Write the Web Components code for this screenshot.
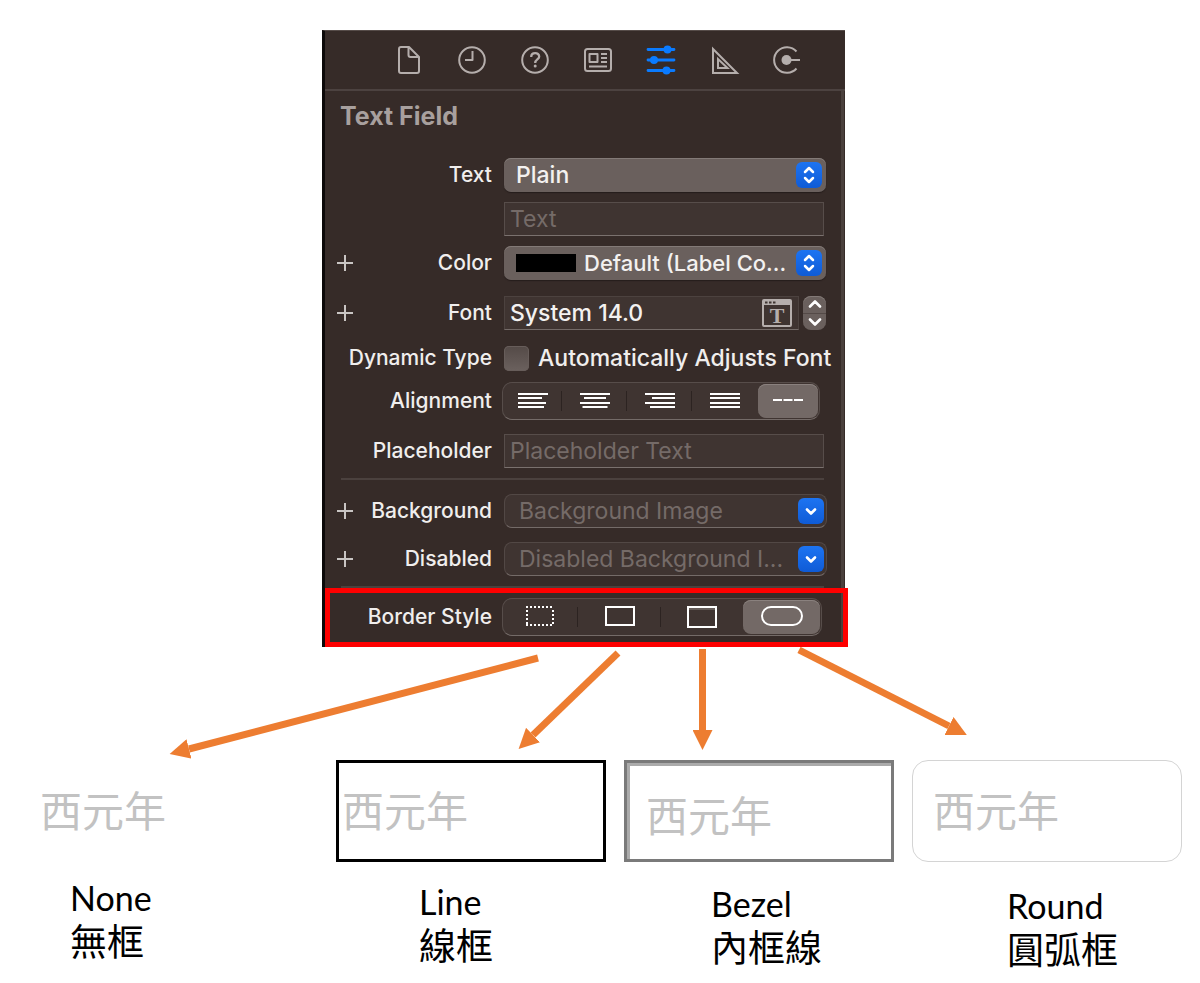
<!DOCTYPE html>
<html lang="zh-Hant">
<head>
<meta charset="utf-8">
<title>UITextField Border Style</title>
<style>
  body {
    margin: 0;
    background: #fff;
    color: #000;
    font-family: Inter, "Noto Sans CJK TC", sans-serif;
  }
</style>
</head>
<body>
<border-style-guide></border-style-guide>

<script>
const define = (name, html, setup) => {
  const template = document.createElement('template');
  template.innerHTML = html;
  customElements.define(name, class extends HTMLElement {
    constructor() {
      super();
      this.attachShadow({ mode: 'open' }).append(template.content.cloneNode(true));
    }
    connectedCallback() {
      if (setup && !this.ready) { this.ready = true; setup(this, this.shadowRoot); }
    }
  });
};

/* Inspector tab bar */
define('inspector-tabs', `
  <style>
    :host { display: block; border-bottom: 2px solid #4c4240; }
    nav { display: flex; height: 58px; padding: 0 27px 0 52px; }
    button { flex: 1; display: grid; place-items: center; padding: 0; border: 0; background: none; color: #b5aeac; }
    button[aria-pressed=true] { color: #0a7bff; }
    svg { display: block; width: 32px; height: 32px; fill: none; stroke: currentColor; stroke-width: 2; stroke-linejoin: round; }
  </style>
  <nav aria-label="Inspectors">
    <button aria-label="File"><svg viewBox="0 0 32 32"><path d="M8 3h8l10 10v14q0 2-2 2H8q-2 0-2-2V5q0-2 2-2zM15.500 3v8q0 2 2 2h8"/></svg></button>
    <button aria-label="History"><svg viewBox="0 0 32 32"><circle cx="16" cy="16" r="12.800"/><path d="M16.500 7v9H9"/></svg></button>
    <button aria-label="Quick Help"><svg viewBox="0 0 32 32"><circle cx="16" cy="16" r="12.800"/><path d="M12.200 13c0-5 8-5 8-.5 0 3-4 3-4 6.500" stroke-width="2.300"/><circle cx="16.200" cy="22" r="1.500" fill="currentColor" stroke="none"/></svg></button>
    <button aria-label="Identity"><svg viewBox="0 0 32 32"><rect x="3" y="5" width="26" height="22" rx="2.500"/><path d="M7.500 10h8v8h-8zM19 10h6M19 14h6M19 18h6M7 22.500h18"/></svg></button>
    <button aria-label="Attributes" aria-pressed="true"><svg viewBox="0 0 32 32"><path d="M3 5.500h26M3 16h26M3 26.500h26" stroke-width="2.800" stroke-linecap="round"/><g fill="currentColor" stroke="none"><circle cx="22.500" cy="5.500" r="4"/><circle cx="9" cy="16" r="4"/><circle cx="21.500" cy="26.500" r="4"/></g></svg></button>
    <button aria-label="Size"><svg viewBox="0 0 32 32"><path d="M5 5v24h24z" stroke-linejoin="miter"/><path d="M10 15v9h9.500z" stroke-linejoin="miter"/></svg></button>
    <button aria-label="Connections"><svg viewBox="0 0 32 32"><path d="M25.500 7.500A12.800 12.800 0 1 0 25.500 24.500M16 16h13"/><circle cx="15.500" cy="16" r="5" fill="currentColor" stroke="none"/></svg></button>
  </nav>`);

/* One labelled line of the inspector */
define('inspector-row', `
  <style>
    :host { display: flex; align-items: center; min-height: 34px; padding-left: 12px; }
    .add { display: none; padding: 0; border: 0; background: none; color: #c9c5c3; }
    :host([addable]) .add { display: block; }
    .add svg { display: block; width: 16px; height: 16px; stroke: currentColor; stroke-width: 2; }
    .name { flex: 1; text-align: right; font-size: 21px; line-height: 24px; font-weight: 500; white-space: nowrap; }
    .field { flex: none; width: 337px; margin-left: 12px; }
  </style>
  <button class="add" aria-label="Add variation"><svg viewBox="0 0 16 16"><path d="M8 0v16M0 8h16"/></svg></button>
  <span class="name"></span>
  <div class="field"><slot></slot></div>`,
  (host, root) => { root.querySelector('.name').textContent = host.getAttribute('name') || ''; });

/* Pop-up menu */
define('pop-up', `
  <style>
    :host { display: block; width: 322px; }
    .box { display: grid; grid-template-columns: auto 1fr 30px; align-items: center; height: 34px; box-sizing: border-box;
           border-radius: 7px; background: #6a605d; box-shadow: inset 0 1px #837a77, 0 1px 1px #251d1b; }
    .swatch { display: none; width: 60px; height: 18px; margin-left: 12px; background: #000; }
    :host([swatch]) .swatch { display: block; }
    select { grid-column: 2 / 4; grid-row: 1; width: 100%; height: 34px; padding: 0 30px 0 12px; border: 0; background: none;
             appearance: none; color: #f3f1f0; font: 500 23px/34px Inter, sans-serif; }
    :host([swatch]) select { padding-left: 8px; font-size: 22px; }
    svg { grid-column: 3; grid-row: 1; width: 26px; height: 26px; border-radius: 6px; background: linear-gradient(#1d74f2, #0f5bd6);
          fill: none; stroke: #fff; stroke-width: 2.500; stroke-linecap: round; stroke-linejoin: round; pointer-events: none; }
  </style>
  <div class="box"><span class="swatch"></span>
    <select><option></option></select>
    <svg viewBox="0 0 26 26"><path d="M9 10l4-4 4 4M9 16l4 4 4-4"/></svg></div>`,
  (host, root) => {
    root.querySelector('option').textContent = host.getAttribute('value');
    root.querySelector('select').setAttribute('aria-label', host.getAttribute('label'));
  });

/* Square text box */
define('text-box', `
  <style>
    :host { display: block; width: 320px; }
    input { display: block; width: 100%; height: 34px; box-sizing: border-box; padding: 0 5px; border: 1px solid #574d4a; border-bottom-color: #7a716e;
            border-radius: 0; background: #3f3431; color: #f3f1f0; font: 23px/32px Inter, sans-serif; outline: 0; }
    input::placeholder { color: #756b68; opacity: 1; }
  </style>
  <input type="text">`,
  (host, root) => {
    const input = root.querySelector('input');
    input.placeholder = host.getAttribute('placeholder');
    input.setAttribute('aria-label', host.getAttribute('label'));
  });

/* Font field with its picker button and stepper */
define('font-field', `
  <style>
    :host { display: flex; gap: 4px; width: 322px; }
    .box { flex: 1; min-width: 0; display: flex; align-items: center; box-sizing: border-box; height: 34px; padding-right: 6px;
           border: 1px solid #4c423f; border-bottom-color: #746b68; background: #3f3431; }
    input { flex: 1; min-width: 0; height: 32px; padding: 0 5px; border: 0; background: none; color: #f3f1f0; font: 500 23px/32px Inter, sans-serif; outline: 0; }
    button { display: block; padding: 0; border: 0; background: none; color: #b5aeac; }
    .picker svg { display: block; width: 30px; height: 28px; }
    .stepper { flex: none; display: flex; flex-direction: column; width: 23px; border-radius: 8px; background: #6a605d; overflow: hidden; box-shadow: inset 0 1px #837a77; }
    .stepper button { flex: 1; display: grid; place-items: center; color: #fff; }
    .stepper button + button { border-top: 1px solid #544a47; }
    .stepper svg { display: block; width: 14px; height: 8px; fill: none; stroke: currentColor; stroke-width: 2.600; stroke-linecap: round; stroke-linejoin: round; }
  </style>
  <div class="box">
    <input type="text" value="System 14.0" aria-label="Font">
    <button class="picker" aria-label="Choose font"><svg viewBox="0 0 30 28">
      <rect x="1" y="1" width="28" height="26" rx="1" fill="none" stroke="currentColor" stroke-width="2"/>
      <path d="M1 1h28v5H1z" fill="currentColor"/><path d="M3 3.500h2.500M7 3.500h2.500M11 3.500h2.500" stroke="#3f3431" stroke-width="2"/>
      <text x="15" y="24" text-anchor="middle" font-family="Liberation Serif, serif" font-weight="bold" font-size="22" fill="currentColor">T</text></svg></button>
  </div>
  <div class="stepper">
    <button aria-label="Increase"><svg viewBox="0 0 14 8"><path d="M2 6.500l5-5 5 5"/></svg></button>
    <button aria-label="Decrease"><svg viewBox="0 0 14 8"><path d="M2 1.500l5 5 5-5"/></svg></button>
  </div>`);

/* Tick box */
define('check-box', `
  <style>
    :host { display: block; }
    label { display: flex; align-items: center; gap: 9px; height: 24px; font-size: 23px; line-height: 24px; font-weight: 500; white-space: nowrap; }
    input { appearance: none; flex: none; width: 25px; height: 25px; margin: 0; border-radius: 5px;
            background: linear-gradient(#544a47, #6b615e); box-shadow: inset 0 0 0 1px #675d5a; }
  </style>
  <label><input type="checkbox"><span><slot></slot></span></label>`);

/* Combo box */
define('combo-box', `
  <style>
    :host { display: block; width: 323px; }
    .box { display: flex; align-items: center; box-sizing: border-box; height: 34px; padding-right: 2px;
           border: 1px solid #524845; border-bottom-color: #746b68; border-radius: 8px; background: #3f3431; }
    input { flex: 1; min-width: 0; height: 32px; padding: 0 0 0 14px; border: 0; background: none; color: #f3f1f0; font: 23px/32px Inter, sans-serif; outline: 0; }
    input::placeholder { color: #756b68; opacity: 1; }
    button { padding: 0; border: 0; border-radius: 6px; background: linear-gradient(#1d74f2, #0f5bd6); }
    svg { display: block; width: 26px; height: 26px; fill: none; stroke: #fff; stroke-width: 2.600; stroke-linecap: round; stroke-linejoin: round; }
  </style>
  <div class="box"><input type="text"><button aria-label="Show images"><svg viewBox="0 0 26 26"><path d="M9 11.500l4 4 4-4"/></svg></button></div>`,
  (host, root) => {
    const input = root.querySelector('input');
    input.placeholder = host.getAttribute('placeholder');
    input.setAttribute('aria-label', host.getAttribute('label'));
  });

/* Segmented controls: a radio group drawn as one bar */
const segmentStyle = `
    :host { display: block; margin-left: -2px; }
    fieldset { display: grid; grid-template-columns: var(--cells); box-sizing: border-box; height: 38px; min-width: 0; margin: 0; padding: 1px;
               border: 1px solid #574d4a; border-bottom-color: #746b68; border-radius: 10px; background: #3f3431; }
    label { position: relative; display: grid; place-items: center; border-radius: 8px; }
    label:not(:last-child)::after { content: ""; position: absolute; right: 0; top: 7px; bottom: 7px; width: 1px; background: #2c2321; }
    label:nth-last-child(2)::after { visibility: hidden; }
    label:has(:checked) { background: #736966; box-shadow: inset 0 1px #8a817e; }
    input { position: absolute; inset: 0; margin: 0; opacity: 0; }
    svg { display: block; fill: none; stroke: #fff; stroke-width: 2; }`;

define('alignment-control', `
  <style>${segmentStyle}
    fieldset { --cells: 58px 65px 65px 66px 1fr; width: 318px; }
    svg { width: 30px; height: 16px; }
  </style>
  <fieldset aria-label="Alignment">
    <label><input type="radio" name="a" aria-label="Left"><svg viewBox="0 0 30 16"><path d="M0 1h30M0 5h24M0 10h28M0 14h26"/></svg></label>
    <label><input type="radio" name="a" aria-label="Center"><svg viewBox="0 0 30 16"><path d="M0 1h30M4 5h22M0 10h30M2.500 14h25"/></svg></label>
    <label><input type="radio" name="a" aria-label="Right"><svg viewBox="0 0 30 16"><path d="M0 1h30M7 5h23M0 10h30M5 14h25"/></svg></label>
    <label><input type="radio" name="a" aria-label="Justified"><svg viewBox="0 0 30 16"><path d="M0 1h30M0 5h30M0 10h30M0 14h30"/></svg></label>
    <label><input type="radio" name="a" aria-label="Natural" checked><svg viewBox="0 0 30 16"><path d="M0 7h9M10.500 7h9M21 7h9"/></svg></label>
  </fieldset>`);

define('border-style-control', `
  <style>${segmentStyle}
    fieldset { --cells: 74px 83px 82px 1fr; width: 320px; }
    svg { width: 44px; height: 24px; }
  </style>
  <fieldset aria-label="Border Style">
    <label><input type="radio" name="b" aria-label="None"><svg viewBox="0 0 44 24"><path d="M7 2h28M7 20h28" stroke-dasharray="2 2"/><path d="M8 5v14M34 5v14" stroke-dasharray="2 2"/></svg></label>
    <label><input type="radio" name="b" aria-label="Line"><svg viewBox="0 0 44 24"><rect x="8" y="2" width="28" height="18"/></svg></label>
    <label><input type="radio" name="b" aria-label="Bezel"><svg viewBox="0 0 44 24"><rect x="8" y="2" width="28" height="20"/><path d="M9 4h26" stroke="#8d8582" stroke-width="1"/></svg></label>
    <label><input type="radio" name="b" aria-label="Round" checked><svg viewBox="0 0 44 24"><rect x="2" y="2" width="40" height="18" rx="9"/></svg></label>
  </fieldset>`);

/* Dark attributes inspector */
define('inspector-panel', `
  <style>
    :host { display: block; box-sizing: border-box; border-left: 3px solid #0c0909; background: #362b28; color: #f0eeed; border-top: 1px solid #564c49; }
    .body { margin-right: 1px; border-right: 3px solid #4a403d; }
    h2 { margin: 0; padding: 10px 15px 0; color: #a8a09e; font-size: 25px; line-height: 30px; font-weight: 700; }
    .rows { display: flex; flex-direction: column; padding-top: 27px; }
    .gap10 { margin-top: 10px; } .gap12 { margin-top: 12px; } .gap14 { margin-top: 14px; } .gap16 { margin-top: 16px; }
    .tick { min-height: 24px; }
    .bar { min-height: 38px; }
    hr { width: calc(100% - 33px); height: 2px; margin: 10px 17px 0 16px; border: 0; background: #4b413e; }
    .marked { margin-right: -7px; padding: 5px 4px 6px 0; border: 5px solid #fe0000; box-sizing: border-box; }
    .marked inspector-row { margin-left: -5px; margin-right: -2px; }
  </style>
  <inspector-tabs></inspector-tabs>
  <section class="body">
    <h2>Text Field</h2>
    <div class="rows">
      <inspector-row name="Text"><pop-up label="Text" value="Plain"></pop-up></inspector-row>
      <inspector-row class="gap10"><text-box label="Text value" placeholder="Text"></text-box></inspector-row>
      <inspector-row class="gap10" name="Color" addable><pop-up swatch label="Color" value="Default (Label Co..."></pop-up></inspector-row>
      <inspector-row class="gap16" name="Font" addable><font-field></font-field></inspector-row>
      <inspector-row class="gap16 tick" name="Dynamic Type"><check-box>Automatically Adjusts Font</check-box></inspector-row>
      <inspector-row class="gap12 bar" name="Alignment"><alignment-control></alignment-control></inspector-row>
      <inspector-row class="gap14" name="Placeholder"><text-box label="Placeholder" placeholder="Placeholder Text"></text-box></inspector-row>
      <hr>
      <inspector-row class="gap14" name="Background" addable><combo-box label="Background" placeholder="Background Image"></combo-box></inspector-row>
      <inspector-row class="gap14" name="Disabled" addable><combo-box label="Disabled" placeholder="Disabled Background I..."></combo-box></inspector-row>
      <hr>
      <div class="marked"><inspector-row class="bar" name="Border Style"><border-style-control></border-style-control></inspector-row></div>
    </div>
  </section>`);

/* Arrows from each segment to its sample */
define('callout-arrows', `
  <style>
    :host { display: block; }
    svg { display: block; width: 100%; height: auto; stroke: #ed7d31; stroke-width: 7; }
  </style>
  <svg viewBox="0 0 1200 113" aria-hidden="true">
    <defs><marker id="head" viewBox="0 0 20 20" refX="0" refY="10" markerWidth="20" markerHeight="20" markerUnits="userSpaceOnUse" orient="auto"><path d="M0 0L20 10L0 20z" fill="#ed7d31" stroke="none"/></marker></defs>
    <g>
      <path d="M538 11L189 102" marker-end="url(#head)"/>
      <path d="M618 6L533 88" marker-end="url(#head)"/>
      <path d="M702.500 2V83" marker-end="url(#head)"/>
      <path d="M799 3L949 79" marker-end="url(#head)"/>
    </g>
  </svg>`);

/* A text field drawn in one border style, with its caption */
define('border-sample', `
  <style>
    :host { display: block; min-width: 0; }
    input { display: block; width: 100%; height: 102px; box-sizing: border-box; padding: 0 0 6px; border: 0; background: #fff; border-radius: 0;
            font: 42px/60px "Noto Sans CJK TC", sans-serif; outline: 0; }
    input::placeholder { color: #c2c2c2; opacity: 1; }
    :host([kind=line]) input { border: 3px solid #000; padding-left: 3px; }
    :host([kind=bezel]) input { border: 3px solid #7a7a7a; box-shadow: inset 3px 3px #ababab; padding: 4px 0 0 19px; }
    :host([kind=round]) input { border: 1px solid #d4d4d4; border-radius: 16px; padding-left: 20px; }
    .caption { display: block; padding: var(--drop) 0 0 var(--indent); font: 34px/44px Lato, "Noto Sans CJK TC", sans-serif; }
    .caption span { display: block; }
    .zh { font-size: 37px; }
  </style>
  <label><input type="text" placeholder="西元年">
    <span class="caption"><span><slot></slot></span><span class="zh"><slot name="zh"></slot></span></span></label>`);

define('border-style-guide', `
  <style>
    :host { display: block; }
    .top { display: flex; justify-content: center; padding: 30px 33px 0 0; }
    inspector-panel { width: 523px; }
    .samples { display: grid; grid-template-columns: 278fr 270fr 270fr 270fr; gap: 18px; padding: 0 18px 0 40px; }
    .none { --indent: 30px; --drop: 14px; }
    .line { --indent: 83px; --drop: 18px; }
    .bezel { --indent: 87px; --drop: 20px; }
    .round { --indent: 95px; --drop: 22px; }
  </style>
  <main>
    <div class="top"><inspector-panel></inspector-panel></div>
    <callout-arrows></callout-arrows>
    <div class="samples">
      <border-sample class="none" kind="none">None<span slot="zh">無框</span></border-sample>
      <border-sample class="line" kind="line">Line<span slot="zh">線框</span></border-sample>
      <border-sample class="bezel" kind="bezel">Bezel<span slot="zh">內框線</span></border-sample>
      <border-sample class="round" kind="round">Round<span slot="zh">圓弧框</span></border-sample>
    </div>
  </main>`);
</script>
</body>
</html>
